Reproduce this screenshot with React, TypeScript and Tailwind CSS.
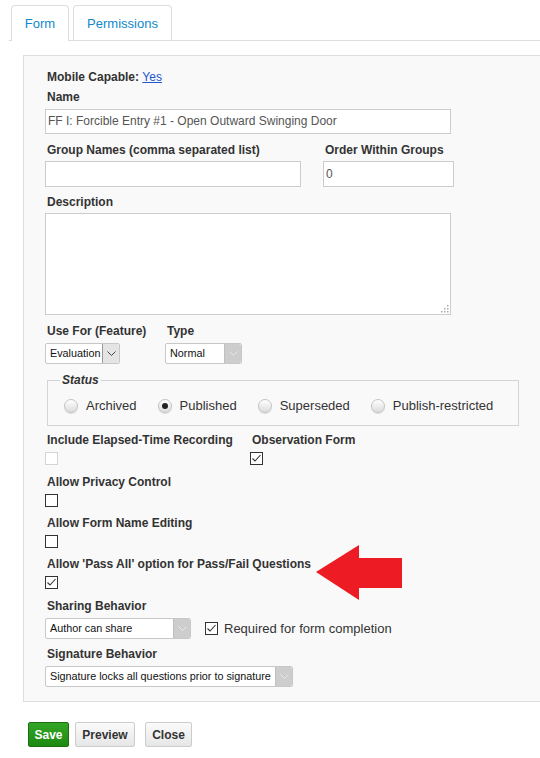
import React from 'react'

function Label({ children, className = '' }: { children: React.ReactNode; className?: string }) {
  return <div className={'h-4 whitespace-nowrap pl-[2px] text-[12px] font-bold leading-4 text-[#333] ' + className}>{children}</div>
}

function Check({ checked = false, disabled = false, className = '' }: { checked?: boolean; disabled?: boolean; className?: string }) {
  return (
    <div
      className={[
        'flex h-[13px] w-[13px] shrink-0 items-center justify-center border bg-white',
        disabled ? 'border-[#d4d4d4]' : 'border-[#333]',
        className,
      ].join(' ')}
    >
      {checked && (
        <svg width="11" height="11" viewBox="0 0 11 11">
          <path d="M1.5 5.5 L4 8 L9.5 2" fill="none" stroke="#333" strokeWidth="1.1" />
        </svg>
      )}
    </div>
  )
}

function Radio({ on = false, label, last = false }: { on?: boolean; label: string; last?: boolean }) {
  return (
    <div className={'flex shrink-0 items-center whitespace-nowrap ' + (last ? '' : 'mr-[21px]')}>
      <div className="flex h-[14px] w-[14px] items-center justify-center rounded-full border border-[#c4c4c4] bg-gradient-to-b from-white to-[#dcdcdc] shadow-[0_1px_1px_rgba(0,0,0,0.12)]">
        {on && <div className="h-[6px] w-[6px] rounded-full bg-[#222]" />}
      </div>
      <span className="ml-[8px] text-[13px] leading-4 text-[#333]">{label}</span>
    </div>
  )
}

function Select({ value, width, active = false }: { value: string; width: string; active?: boolean }) {
  return (
    <div className={'flex h-[21px] items-stretch rounded-[2px] border border-[#c8c8c8] bg-white ' + width}>
      <span className="flex-1 overflow-hidden whitespace-nowrap pl-[4px] text-[10.8px] leading-[19px] text-[#111]">{value}</span>
      <div
        className={[
          'flex w-[17px] shrink-0 items-center justify-center rounded-r-[2px] border-l',
          active ? 'border-[#9a9a9a] bg-[#e4e4e4]' : 'border-[#c0c0c0] bg-[#cdcdcd]',
        ].join(' ')}
      >
        <svg width="9" height="6" viewBox="0 0 9 6">
          <path d="M0.5 0.5 L4.5 4.5 L8.5 0.5" fill="none" stroke={active ? '#444' : '#e8e8e8'} strokeWidth="1" />
        </svg>
      </div>
    </div>
  )
}

export default function App() {
  return (
    <div className="h-[758px] w-[540px] overflow-hidden bg-white font-['Liberation_Sans',Arial,sans-serif]">
      {/* Tabs */}
      <div className="ml-[9px] flex h-[41px] items-end gap-[4px] border-b border-[#ddd] pl-[2px]">
        <div className="-mb-px flex h-[36px] w-[58px] items-center justify-center rounded-t-[4px] border border-b-0 border-[#ddd] bg-white text-[13px] text-[#0f88cc]">
          Form
        </div>
        <div className="flex h-[35px] w-[99px] items-center justify-center rounded-t-[4px] border border-b-0 border-[#ddd] bg-white pt-[1px] text-[13px] text-[#0f88cc]">
          Permissions
        </div>
      </div>

      {/* Panel */}
      <div className="relative ml-[23px] mt-[14px] border border-r-0 border-[#ddd] bg-[#f9f9f9] pb-[14px] pl-[21px] pt-[13px]">
        <Label>
          Mobile Capable: <span className="font-normal text-[#2255cc] underline">Yes</span>
        </Label>
        <Label className="mt-[4px]">Name</Label>
        <div className="mt-[4px] h-[25px] w-[406px] border border-[#ccc] bg-white pl-[2px] text-[12px] leading-[23px] text-[#555]">
          FF I: Forcible Entry #1 - Open Outward Swinging Door
        </div>

        <div className="mt-[8px] flex">
          <div>
            <Label>Group Names (comma separated list)</Label>
            <div className="mt-[3px] h-[26px] w-[256px] border border-[#ccc] bg-white" />
          </div>
          <div className="ml-[22px]">
            <Label>Order Within Groups</Label>
            <div className="mt-[3px] h-[26px] w-[131px] border border-[#ccc] bg-white pl-[2px] text-[12px] leading-[24px] text-[#555]">
              0
            </div>
          </div>
        </div>

        <Label className="mt-[7px]">Description</Label>
        <div className="relative mt-[3px] h-[102px] w-[406px] border border-[#ccc] bg-white">
          <svg className="absolute bottom-[1px] right-[1px]" width="8" height="8" viewBox="0 0 8 8">
            <rect x="6" y="0" width="1.5" height="1.5" fill="#aaa" />
            <rect x="3" y="3" width="1.5" height="1.5" fill="#aaa" />
            <rect x="6" y="3" width="1.5" height="1.5" fill="#aaa" />
            <rect x="0" y="6" width="1.5" height="1.5" fill="#aaa" />
            <rect x="3" y="6" width="1.5" height="1.5" fill="#aaa" />
            <rect x="6" y="6" width="1.5" height="1.5" fill="#aaa" />
          </svg>
        </div>

        <div className="mt-[8px] flex">
          <div className="w-[120px]">
            <Label>Use For (Feature)</Label>
            <div className="mt-[4px]">
              <Select value="Evaluation" width="w-[75px]" active />
            </div>
          </div>
          <div>
            <Label>Type</Label>
            <div className="mt-[4px]">
              <Select value="Normal" width="w-[77px]" />
            </div>
          </div>
        </div>

        <fieldset className="ml-[2px] mt-[8px] w-[472px] min-w-0 border border-[#d4d4d4] px-[12px] pb-[11px]">
          <legend className="px-[2px] text-[12px] font-bold italic leading-4 text-[#333]">Status</legend>
          <div className="ml-[4px] mt-[10px] flex flex-nowrap">
            <Radio label="Archived" />
            <Radio label="Published" on />
            <Radio label="Superseded" />
            <Radio label="Publish-restricted" last />
          </div>
        </fieldset>

        <div className="mt-[6px] flex">
          <div className="w-[205px]">
            <Label>Include Elapsed-Time Recording</Label>
            <Check disabled className="mt-[4px]" />
          </div>
          <div>
            <Label>Observation Form</Label>
            <Check checked className="mt-[4px]" />
          </div>
        </div>

        <Label className="mt-[9px]">Allow Privacy Control</Label>
        <Check className="mt-[4px]" />

        <Label className="mt-[8px]">Allow Form Name Editing</Label>
        <Check className="mt-[4px]" />

        <Label className="mt-[8px]">Allow 'Pass All' option for Pass/Fail Questions</Label>
        <Check checked className="mt-[4px]" />

        <Label className="mt-[9px]">Sharing Behavior</Label>
        <div className="mt-[4px] flex items-center">
          <Select value="Author can share" width="w-[146px]" />
          <Check checked className="ml-[14px]" />
          <span className="ml-[6px] text-[13px] leading-4 text-[#333]">Required for form completion</span>
        </div>

        <Label className="mt-[7px]">Signature Behavior</Label>
        <div className="mt-[4px]">
          <Select value="Signature locks all questions prior to signature" width="w-[248px]" />
        </div>

        {/* annotation arrow */}
        <svg className="absolute left-[291px] top-[488px]" width="88" height="58" viewBox="0 0 88 58">
          <polygon points="1,28 44,1 44,14 87,14 87,44 44,44 44,56" fill="#ed1c24" />
        </svg>
      </div>

      {/* Buttons */}
      <div className="ml-[28px] mt-[20px] flex">
        <div className="flex h-[25px] w-[41px] items-center justify-center rounded-[2px] border border-[#1d6e12] bg-gradient-to-b from-[#34a526] to-[#1c8a10] text-[12px] font-bold text-white">
          Save
        </div>
        <div className="ml-[6px] flex h-[25px] w-[60px] items-center justify-center rounded-[2px] border border-[#ccc] bg-gradient-to-b from-[#fbfbfb] to-[#e6e6e6] text-[12px] font-bold text-[#333]">
          Preview
        </div>
        <div className="ml-[10px] flex h-[25px] w-[47px] items-center justify-center rounded-[2px] border border-[#ccc] bg-gradient-to-b from-[#fbfbfb] to-[#e6e6e6] text-[12px] font-bold text-[#333]">
          Close
        </div>
      </div>
    </div>
  )
}
